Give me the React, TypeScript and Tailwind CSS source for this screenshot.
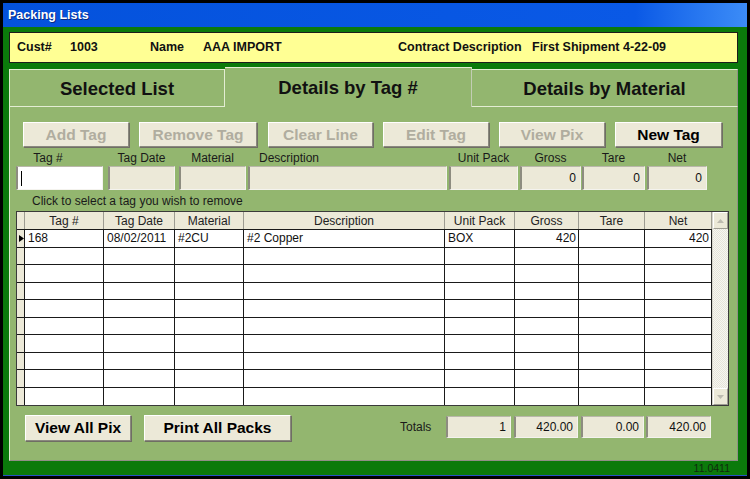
import React from "react";

const cols = [
  { w: "w-[79px]", label: "Tag #" },
  { w: "w-[71px]", label: "Tag Date" },
  { w: "w-[69px]", label: "Material" },
  { w: "w-[201px]", label: "Description" },
  { w: "w-[70px]", label: "Unit Pack" },
  { w: "w-[64px]", label: "Gross" },
  { w: "w-[66px]", label: "Tare" },
  { w: "w-[67px]", label: "Net" },
];

const firstRow: [string, "l" | "r"][] = [
  ["168", "l"],
  ["08/02/2011", "l"],
  ["#2CU", "l"],
  ["#2 Copper", "l"],
  ["BOX", "l"],
  ["420", "r"],
  ["", "r"],
  ["420", "r"],
];

function Btn({ cls, label, disabled }: { cls: string; label: string; disabled?: boolean }) {
  return (
    <div
      className={`${cls} h-[25px] flex items-center justify-center bg-[#ece9d8] border border-t-white border-l-white border-r-[#8a897e] border-b-[#8a897e] shadow-[1px_1px_0_#6f6e64] text-[15.5px] font-bold leading-none ${
        disabled ? "text-[#b0ad9f]" : "text-black"
      }`}
    >
      {label}
    </div>
  );
}

function Field({ cls, value }: { cls: string; value?: string }) {
  return (
    <div
      className={`${cls} h-[24px] flex items-center justify-end pr-[4px] text-[12px] text-[#111] bg-[#ece9d8] border-l-2 border-t border-l-[#8d8c80] border-t-[#b9b7aa] border-r border-b border-r-[#f4f3ee] border-b-[#f4f3ee]`}
    >
      {value}
    </div>
  );
}

export default function App() {
  return (
    <div className="w-[750px] h-[479px] bg-black pt-[3px] pl-[3px] font-['Liberation_Sans',Arial,Helvetica,sans-serif] overflow-hidden">
      <div className="w-[744px] h-[473px] flex flex-col bg-[#0b7a0b] border-b border-b-[#2552c4]">
        {/* Title bar */}
        <div className="h-[24px] shrink-0 flex items-center pl-[5px] bg-linear-to-r from-[#0452dc] via-[#0a59e6] via-85% to-[#3c8cf7] text-white text-[12.5px] font-bold [text-shadow:1px_1px_0_#0a2a80]">
          Packing Lists
        </div>
        <div className="flex flex-col pl-[6px] pr-[9px] pt-[5px]">
          {/* Yellow info bar */}
          <div className="h-[31px] flex items-center bg-[#ffff94] border border-[#1c1c1c] text-[12.5px] font-bold text-[#111] whitespace-nowrap">
            <span className="w-[60px] pl-[7px]">Cust#</span>
            <span className="w-[80px]">1003</span>
            <span className="w-[53px]">Name</span>
            <span className="w-[195px]">AAA IMPORT</span>
            <span className="w-[134px]">Contract Description</span>
            <span>First Shipment 4-22-09</span>
          </div>
          {/* Tabs */}
          <div className="h-[44px] flex items-end">
            <div className="w-[216px] h-[38px] flex items-center justify-center pt-[2px] bg-[#93b66f] border border-[#e3edd3] text-[18.5px] font-bold text-[#111]">
              Selected List
            </div>
            <div className="w-[247px] h-[40px] flex items-center justify-center bg-[#93b66f] border-t border-t-[#e3edd3] border-r border-r-[#c3cdb4] text-[18.5px] font-bold text-[#111]">
              Details by Tag #
            </div>
            <div className="flex-1 h-[38px] flex items-center justify-center pt-[2px] bg-[#93b66f] border-t border-b border-t-[#e3edd3] border-b-[#e3edd3] border-r border-r-[#8f8f86] text-[18.5px] font-bold text-[#111]">
              Details by Material
            </div>
          </div>
          {/* Panel */}
          <div className="h-[354px] flex flex-col bg-[#93b66f] border-l border-l-[#e3edd3] border-r border-r-[#8f8f86] border-b border-b-[#8f8f86]">
            {/* action buttons */}
            <div className="flex pt-[15px] pl-[13px]">
              <Btn cls="w-[106px]" label="Add Tag" disabled />
              <Btn cls="w-[118px] ml-[10px]" label="Remove Tag" disabled />
              <Btn cls="w-[105px] ml-[11px]" label="Clear Line" disabled />
              <Btn cls="w-[106px] ml-[10px]" label="Edit Tag" disabled />
              <Btn cls="w-[106px] ml-[10px]" label="View Pix" disabled />
              <Btn cls="w-[107px] ml-[10px]" label="New Tag" />
            </div>
            {/* labels */}
            <div className="h-[19px] flex items-end pb-[1px] pl-[6px] text-[12px] leading-[14px] text-[#1a1a1a] whitespace-nowrap">
              <div className="w-[87px] text-center pr-[23px]">Tag #</div>
              <div className="w-[67px] ml-[5px] text-center">Tag Date</div>
              <div className="w-[67px] ml-[4px] text-center">Material</div>
              <div className="w-[199px] ml-[2px] pl-[11px]">Description</div>
              <div className="w-[69px] ml-[2px] text-center">Unit Pack</div>
              <div className="w-[61px] ml-[2px] text-center">Gross</div>
              <div className="w-[63px] ml-[1px] text-center">Tare</div>
              <div className="w-[60px] ml-[2px] text-center">Net</div>
            </div>
            {/* inputs */}
            <div className="flex pl-[6px]">
              <div className="w-[87px] h-[24px] bg-white flex items-center pl-[3px] border-l-2 border-t border-l-[#8d8c80] border-t-[#b9b7aa] border-r border-b border-r-[#f4f3ee] border-b-[#f4f3ee]">
                <div className="w-px h-[15px] bg-black" />
              </div>
              <Field cls="w-[67px] ml-[5px]" />
              <Field cls="w-[67px] ml-[4px]" />
              <Field cls="w-[199px] ml-[2px]" />
              <Field cls="w-[69px] ml-[2px]" />
              <Field cls="w-[61px] ml-[2px]" value="0" />
              <Field cls="w-[63px] ml-[1px]" value="0" />
              <Field cls="w-[60px] ml-[2px]" value="0" />
            </div>
            {/* hint */}
            <div className="h-[21px] flex items-center pl-[22px] text-[12px] text-[#1a1a1a]">
              Click to select a tag you wish to remove
            </div>
            {/* grid */}
            <div className="ml-[6px] w-[713px] h-[195px] flex border border-[#3a3a3a] bg-white">
              <div className="flex flex-col w-[695px]">
                {/* header */}
                <div className="h-[18px] flex bg-[#ece9d8] border-b border-b-[#1a1a1a] text-[12px] text-[#222]">
                  <div className="w-[8px] border-r border-r-[#9d9c92]" />
                  {cols.map((c) => (
                    <div
                      key={c.label}
                      className={`${c.w} flex items-center justify-center border-r border-r-[#9d9c92]`}
                    >
                      {c.label}
                    </div>
                  ))}
                </div>
                {Array.from({ length: 10 }).map((_, r) => (
                  <div
                    key={r}
                    className={`h-[17.5px] flex text-[12px] text-[#111] ${r < 9 ? "border-b border-b-[#1a1a1a]" : ""}`}
                  >
                    <div className="w-[8px] bg-[#ece9d8] border-r border-r-[#1a1a1a] flex items-center justify-end">
                      {r === 0 && (
                        <svg width="5" height="7" viewBox="0 0 5 7">
                          <polygon points="0,0 5,3.5 0,7" fill="#000" />
                        </svg>
                      )}
                    </div>
                    {cols.map((c, i) => (
                      <div
                        key={c.label}
                        className={`${c.w} flex items-center border-r border-r-[#1a1a1a] ${
                          r === 0 && firstRow[i][1] === "r" ? "justify-end pr-[2px]" : "justify-start pl-[3px]"
                        }`}
                      >
                        {r === 0 ? firstRow[i][0] : ""}
                      </div>
                    ))}
                  </div>
                ))}
              </div>
              {/* scrollbar */}
              <div className="w-[16px] flex flex-col bg-[#f3f1e9] border-l border-l-[#d8d6cc]">
                <div className="h-[17px] flex items-center justify-center bg-[#ece9d8] border border-t-white border-l-white border-r-[#9d9c92] border-b-[#9d9c92]">
                  <svg width="7" height="4" viewBox="0 0 7 4">
                    <polygon points="0,4 3.5,0 7,4" fill="#bdbbb0" />
                  </svg>
                </div>
                <div className="flex-1 bg-[repeating-conic-gradient(#f7f6f0_0_25%,#e6e4da_0_50%)] bg-[length:2px_2px]" />
                <div className="h-[17px] flex items-center justify-center bg-[#ece9d8] border border-t-white border-l-white border-r-[#9d9c92] border-b-[#9d9c92]">
                  <svg width="7" height="4" viewBox="0 0 7 4">
                    <polygon points="0,0 3.5,4 7,0" fill="#bdbbb0" />
                  </svg>
                </div>
              </div>
            </div>
            {/* bottom row */}
            <div className="flex items-start mt-[9px] pl-[15px]">
              <div className="w-[106px] h-[26px] flex items-center justify-center bg-[#ece9d8] border border-t-white border-l-white border-r-[#8a897e] border-b-[#8a897e] shadow-[1px_1px_0_#6f6e64] text-[15.5px] font-bold text-black">
                View All Pix
              </div>
              <div className="w-[147px] ml-[13px] h-[26px] flex items-center justify-center bg-[#ece9d8] border border-t-white border-l-white border-r-[#8a897e] border-b-[#8a897e] shadow-[1px_1px_0_#6f6e64] text-[15.5px] font-bold text-black">
                Print All Packs
              </div>
              <div className="ml-[109px] w-[38px] h-[22px] mt-[1px] flex items-center text-[12px] text-[#1a1a1a]">
                Totals
              </div>
              <div className="flex mt-[1px] ml-[8px]">
                <div className="w-[65px] h-[22px] flex items-center justify-end pr-[4px] text-[12px] text-[#111] bg-[#ece9d8] border-l-2 border-t border-l-[#8d8c80] border-t-[#b9b7aa] border-r border-b border-r-[#f4f3ee] border-b-[#f4f3ee]">
                  1
                </div>
                <div className="w-[64px] ml-[3px] h-[22px] flex items-center justify-end pr-[4px] text-[12px] text-[#111] bg-[#ece9d8] border-l-2 border-t border-l-[#8d8c80] border-t-[#b9b7aa] border-r border-b border-r-[#f4f3ee] border-b-[#f4f3ee]">
                  420.00
                </div>
                <div className="w-[63px] ml-[3px] h-[22px] flex items-center justify-end pr-[4px] text-[12px] text-[#111] bg-[#ece9d8] border-l-2 border-t border-l-[#8d8c80] border-t-[#b9b7aa] border-r border-b border-r-[#f4f3ee] border-b-[#f4f3ee]">
                  0.00
                </div>
                <div className="w-[65px] ml-[2px] h-[22px] flex items-center justify-end pr-[4px] text-[12px] text-[#111] bg-[#ece9d8] border-l-2 border-t border-l-[#8d8c80] border-t-[#b9b7aa] border-r border-b border-r-[#f4f3ee] border-b-[#f4f3ee]">
                  420.00
                </div>
              </div>
            </div>
          </div>
          {/* version */}
          <div className="h-[14px] flex items-center justify-end pr-[8px] text-[10.5px] leading-none text-[#0f2a0f]">
            11.0411
          </div>
        </div>
      </div>
    </div>
  );
}
